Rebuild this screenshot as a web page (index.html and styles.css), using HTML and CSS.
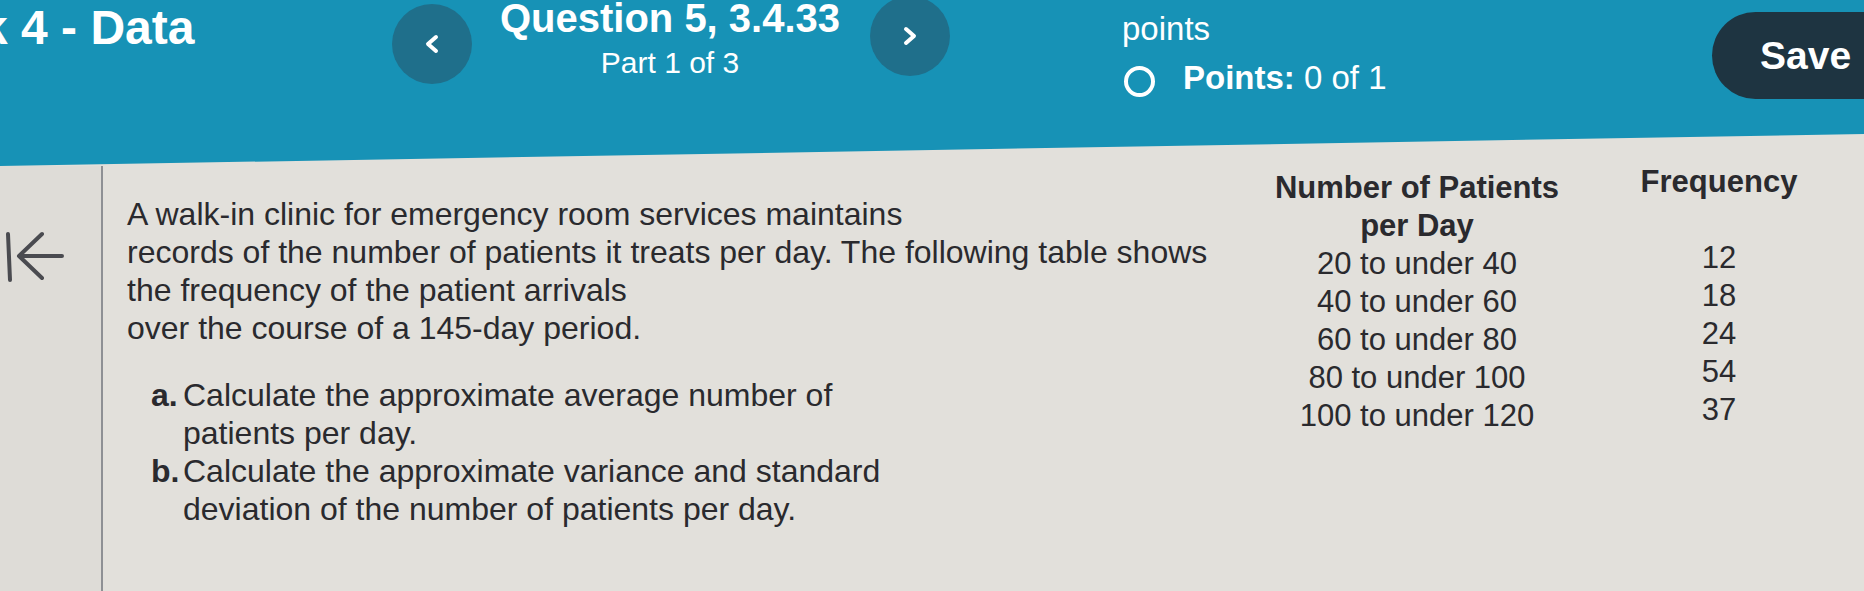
FILE: index.html
```html
<!DOCTYPE html>
<html lang="en">
<head>
<meta charset="utf-8">
<title>Question 5, 3.4.33</title>
<link rel="stylesheet" href="styles.css">
</head>
<body>
<div class="page">
  <header class="topbar">
    <div class="title">k 4 - Data</div>
    <button class="nav prev" aria-label="Previous question">
      <svg width="16" height="20" viewBox="0 0 16 20"><path d="M12 3 L4 10 L12 17" fill="none" stroke="#fff" stroke-width="4" stroke-linecap="round" stroke-linejoin="round"/></svg>
    </button>
    <div class="qinfo">
      <div class="qtitle">Question 5, 3.4.33</div>
      <div class="qpart">Part 1 of 3</div>
    </div>
    <button class="nav next" aria-label="Next question">
      <svg width="16" height="20" viewBox="0 0 16 20"><path d="M4 3 L12 10 L4 17" fill="none" stroke="#fff" stroke-width="4" stroke-linecap="round" stroke-linejoin="round"/></svg>
    </button>
    <div class="points">
      <div class="pts-label">points</div>
      <div class="pts-row"><span class="ring"></span><span class="pts-text"><b>Points:</b> 0 of 1</span></div>
    </div>
    <button class="save">Save</button>
  </header>
  <div class="body">
    <aside class="side">
      <svg class="collapse" width="64" height="56" viewBox="0 0 64 56"><path d="M8 6 L10 52" fill="none" stroke="#4a4b50" stroke-width="4" stroke-linecap="round"/><path d="M42 6 L19 28 L42 50 M19 28 L62 28" fill="none" stroke="#4a4b50" stroke-width="4" stroke-linecap="round" stroke-linejoin="round"/></svg>
    </aside>
    <main class="content">
      <div class="question">
        <p class="intro">A walk-in clinic for emergency room services maintains<br>records of the number of patients it treats per day. The following table shows<br>the frequency of the patient arrivals<br>over the course of a 145-day period.</p>
        <ol class="parts">
          <li><span class="mk">a.</span><span>Calculate the approximate average number of<br>patients per day.</span></li>
          <li><span class="mk">b.</span><span>Calculate the approximate variance and standard<br>deviation of the number of patients per day.</span></li>
        </ol>
      </div>
      <div class="freq-table">
        <div class="col col-range">
          <div class="th">Number of Patients<br>per Day</div>
          <div class="td">20 to under 40</div>
          <div class="td">40 to under 60</div>
          <div class="td">60 to under 80</div>
          <div class="td">80 to under 100</div>
          <div class="td">100 to under 120</div>
        </div>
        <div class="col col-freq">
          <div class="th">Frequency</div>
          <div class="td blank"></div>
          <div class="td">12</div>
          <div class="td">18</div>
          <div class="td">24</div>
          <div class="td">54</div>
          <div class="td">37</div>
        </div>
      </div>
    </main>
  </div>
</div>
</body>
</html>
```

FILE: styles.css
```css
html, body {
  margin: 0;
  padding: 0;
}
body {
  width: 1864px;
  height: 591px;
  overflow: hidden;
  background: #e2e0db;
  font-family: "Liberation Sans", Arial, sans-serif;
  color: #2a2a2e;
}
.page {
  width: 1864px;
  height: 591px;
  display: flex;
  flex-direction: column;
  overflow: hidden;
}
.topbar {
  height: 166px;
  flex: none;
  background: #1792b6;
  clip-path: polygon(0 0, 100% 0, 100% 134px, 0 166px);
  display: flex;
  align-items: flex-start;
  color: #fff;
}
.title {
  flex: none;
  width: 411px;
  margin-left: -19px;
  font-size: 48px;
  font-weight: bold;
  line-height: 56px;
  white-space: nowrap;
}
.nav {
  flex: none;
  width: 80px;
  height: 80px;
  border-radius: 50%;
  border: none;
  padding: 0;
  background: #1f6f8b;
  display: flex;
  align-items: center;
  justify-content: center;
}
.prev {
  margin-top: 4px;
}
.qinfo {
  flex: none;
  width: 360px;
  margin-left: 18px;
  margin-top: -4px;
  text-align: center;
  white-space: nowrap;
}
.qtitle {
  font-size: 40px;
  font-weight: bold;
  line-height: 44px;
}
.qpart {
  font-size: 30px;
  line-height: 36px;
  margin-top: 5px;
}
.next {
  margin-left: 20px;
  margin-top: -4px;
}
.points {
  flex: 1;
  margin-left: 172px;
  margin-top: 10px;
  white-space: nowrap;
}
.pts-label {
  font-size: 33px;
  line-height: 38px;
}
.pts-row {
  display: flex;
  align-items: center;
  gap: 28px;
  margin-top: 10px;
  font-size: 33px;
  line-height: 38px;
}
.ring {
  width: 23px;
  height: 23px;
  margin-left: 2px;
  margin-top: 8px;
  border: 4px solid #fff;
  border-radius: 50%;
  flex: none;
}
.pts-text b {
  font-weight: bold;
}
.save {
  flex: none;
  width: 200px;
  height: 87px;
  margin-top: 12px;
  margin-right: -48px;
  border: none;
  border-radius: 44px;
  background: #1e3441;
  color: #fff;
  font-family: "Liberation Sans", Arial, sans-serif;
  font-size: 39px;
  font-weight: bold;
  text-align: left;
  padding: 0 0 0 48px;
}
.body {
  flex: 1;
  display: flex;
  min-height: 0;
}
.side {
  flex: none;
  width: 103px;
  border-right: 2px solid #8e9094;
  background: #dedcd7;
  padding-top: 62px;
  box-sizing: border-box;
}
.collapse {
  display: block;
  margin-left: 0;
}
.content {
  flex: 1;
  display: flex;
  align-items: flex-start;
  padding-left: 24px;
}
.question {
  flex: none;
  width: 1110px;
  font-size: 32px;
  line-height: 38px;
  white-space: nowrap;
}
.intro {
  margin: 29px 0 0 0;
}
.parts {
  list-style: none;
  margin: 29px 0 0 0;
  padding: 0 0 0 24px;
}
.parts li {
  display: flex;
}
.mk {
  flex: none;
  width: 32px;
  font-weight: bold;
}
.freq-table {
  display: flex;
  gap: 52px;
  margin-left: 30px;
  font-size: 31px;
  line-height: 38px;
  white-space: nowrap;
  text-align: center;
}
.col-range {
  width: 300px;
  margin-top: 3px;
}
.col-freq {
  width: 200px;
  margin-top: -3px;
}
.th {
  font-weight: bold;
}
.blank {
  height: 38px;
}
```
